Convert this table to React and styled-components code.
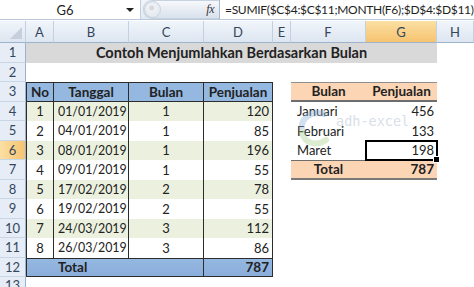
import React from 'react';
import styled, { createGlobalStyle } from 'styled-components';

const GlobalStyle = createGlobalStyle`
  html, body {
    margin: 0;
    padding: 0;
    background: #fff;
  }
  body {
    width: 474px;
    height: 287px;
    overflow: hidden;
    font-family: Lato, "Open Sans", sans-serif;
  }
`;

const Window = styled.div`
  width: 474px;
  height: 287px;
  display: flex;
  flex-direction: column;
  overflow: hidden;
  position: relative;
  background: #fff;
`;

const FormulaBar = styled.div`
  display: flex;
  align-items: stretch;
  height: 21px;
  border-bottom: 1px solid #b9c9dc;
  background: linear-gradient(#f1f5fa, #e3eaf3);
`;

const NameBox = styled.div`
  width: 140px;
  display: flex;
  align-items: center;
  background: #fff;
  border-right: 1px solid #c3cfdd;
  font-size: 13px;
  color: #222;
`;

const NameText = styled.span`
  flex: 1;
  text-align: center;
  padding-left: 4px;
`;

const DropArrow = styled.span`
  width: 0;
  height: 0;
  margin-right: 6px;
  border-left: 4px solid transparent;
  border-right: 4px solid transparent;
  border-top: 4px solid #222;
`;

const FxArea = styled.div`
  width: 76px;
  display: flex;
  align-items: center;
  padding-left: 2px;
`;

const Pill = styled.div`
  flex: 1;
  height: 17px;
  display: flex;
  align-items: center;
  justify-content: space-between;
  border-radius: 9px 0 0 9px;
  background: linear-gradient(#f6f8fb, #d9e1ec);
  border: 1px solid #c6d2e0;
  border-right: none;
`;

const Knob = styled.span`
  width: 15px;
  height: 15px;
  border-radius: 50%;
  background: radial-gradient(circle at 45% 40%, #d5d9df 0 2px, #eef1f5 3px, #dfe5ec 100%);
  border: 1px solid #c9d2dd;
`;

const Fx = styled.span`
  font-family: "Liberation Serif", serif;
  font-style: italic;
  font-size: 12px;
  color: #333;
  margin-right: 5px;
  letter-spacing: -0.5px;
`;

const FormulaInput = styled.div`
  flex: 1;
  display: flex;
  align-items: center;
  padding-left: 5px;
  background: #fff;
  border-left: 1px solid #a9b8cb;
  font-size: 12px;
  letter-spacing: -0.3px;
  color: #1e1e1e;
  white-space: nowrap;
  overflow: hidden;
`;

const Sheet = styled.div`
  position: relative;
  margin-top: 1px;
  display: grid;
  grid-template-columns: 26px 28px 75px 75px 69px 18px 75px 71px 1fr;
  grid-template-rows: 22px repeat(12, 19.5px) 1fr;
  flex: 1;
`;

const ColHead = styled.div`
  display: flex;
  align-items: center;
  justify-content: center;
  font-size: 13px;
  color: #34465c;
  background: ${(p) =>
    p.$active
      ? 'linear-gradient(#fbe0a4, #f6c36f)'
      : 'linear-gradient(#f1f5fb, #dde6f1)'};
  border-right: 1px solid #c2d0e1;
  border-bottom: 1px solid #9db3cc;
  box-sizing: border-box;
`;

const Corner = styled(ColHead)`
  position: relative;
  &::after {
    content: '';
    position: absolute;
    right: 3px;
    bottom: 3px;
    border-left: 12px solid transparent;
    border-bottom: 12px solid #c6cfdb;
  }
`;

const RowHead = styled.div`
  display: flex;
  align-items: center;
  justify-content: center;
  font-size: 13px;
  color: #34465c;
  background: ${(p) =>
    p.$active ? 'linear-gradient(90deg, #fbe0a4, #f6c36f)' : '#e6edf7'};
  border-right: 1px solid #9db3cc;
  border-bottom: 1px solid #c9d6e6;
  box-sizing: border-box;
`;

const DARK = '#2c2c2c';

const Cell = styled.div`
  position: relative;
  grid-column: span ${(p) => p.$span || 1};
  display: flex;
  align-items: center;
  justify-content: ${(p) =>
    p.$align === 'right' ? 'flex-end' : p.$align === 'center' ? 'center' : 'flex-start'};
  padding: 0 ${(p) => (p.$align === 'right' ? '3px' : '0')} 0
    ${(p) => (p.$indent != null ? `${p.$indent}px` : '5px')};
  box-sizing: border-box;
  font-size: ${(p) => (p.$size ? `${p.$size}px` : p.$bold ? '13.5px' : '13px')};
  font-weight: ${(p) => (p.$bold ? 700 : 400)};
  color: #222;
  white-space: nowrap;
  background: ${(p) => p.$fill || 'transparent'};
  border-left: ${(p) => p.$bl || 'none'};
  border-right: ${(p) => p.$br || 'none'};
  border-top: ${(p) => p.$bt || 'none'};
  border-bottom: ${(p) => p.$bb || 'none'};
  ${(p) =>
    p.$selected &&
    `
    outline: 2px solid #000;
    outline-offset: -1px;
    z-index: 1;
    &::after {
      content: '';
      position: absolute;
      right: -3px;
      bottom: -3px;
      width: 5px;
      height: 5px;
      background: #000;
      border: 1px solid #fff;
    }
  `}
`;

const Watermark = styled.div`
  position: absolute;
  left: 296px;
  top: 88px;
  display: flex;
  align-items: flex-start;
  pointer-events: none;
  opacity: 0.4;
`;

const WatermarkText = styled.span`
  font-family: "DejaVu Sans Mono", monospace;
  font-size: 13.5px;
  color: #9fb0c8;
  margin-left: 4px;
  margin-top: 4px;
`;

const BLUE = '#95b8e0';
const GREEN = '#ebf1de';
const ORANGE = '#fcd5b4';
const line = `1px solid ${DARK}`;

const leftTable = [
  ['1', '01/01/2019', '1', '120'],
  ['2', '04/01/2019', '1', '85'],
  ['3', '08/01/2019', '1', '196'],
  ['4', '09/01/2019', '1', '55'],
  ['5', '17/02/2019', '2', '78'],
  ['6', '19/02/2019', '2', '55'],
  ['7', '24/03/2019', '3', '112'],
  ['8', '26/03/2019', '3', '86'],
];

const summary = [
  ['Januari', '456'],
  ['Februari', '133'],
  ['Maret', '198'],
];

const columns = ['A', 'B', 'C', 'D', 'E', 'F', 'G', 'H'];

function buildRow(r) {
  const cells = [];
  const k = (c) => `${r}-${c}`;
  if (r === 1) {
    cells.push(
      <Cell key={k('A')} $span={7} $align="center" $indent={0} $bold $size={14.5} $fill="#d9d9d9">
        Contoh Menjumlahkan Berdasarkan Bulan
      </Cell>
    );
    cells.push(<Cell key={k('H')} />);
    return cells;
  }
  if (r === 2 || r > 12) {
    columns.forEach((c) => cells.push(<Cell key={k(c)} />));
    return cells;
  }
  // left table
  if (r === 3) {
    ['No', 'Tanggal', 'Bulan', 'Penjualan'].forEach((t, i) =>
      cells.push(
        <Cell
          key={k(i)}
          $align="center"
          $indent={0}
          $bold
          $fill={BLUE}
          $bt={line}
          $bb={line}
          $br={line}
          $bl={i === 0 ? line : undefined}
        >
          {t}
        </Cell>
      )
    );
  } else if (r <= 11) {
    const d = leftTable[r - 4];
    const fill = r % 2 === 0 ? GREEN : '#fff';
    cells.push(
      <Cell key={k('A')} $align="center" $indent={0} $fill={fill} $br={line} $bl={line}>
        {d[0]}
      </Cell>
    );
    cells.push(
      <Cell key={k('B')} $indent={4} $size={12.4} $fill={fill} $br={line}>
        {d[1]}
      </Cell>
    );
    cells.push(
      <Cell key={k('C')} $align="center" $indent={0} $fill={fill} $br={line}>
        {d[2]}
      </Cell>
    );
    cells.push(
      <Cell key={k('D')} $align="right" $fill={fill} $br={line}>
        {d[3]}
      </Cell>
    );
  } else {
    cells.push(
      <Cell
        key={k('A')}
        $span={3}
        $indent={31}
        $bold
        $fill={`linear-gradient(${BLUE}, #8aaedb)`}
        $bt={line}
        $bb={line}
        $br={line}
        $bl={line}
      >
        Total
      </Cell>
    );
    cells.push(
      <Cell
        key={k('D')}
        $align="right"
        $bold
        $fill={`linear-gradient(${BLUE}, #8aaedb)`}
        $bt={line}
        $bb={line}
        $br={line}
      >
        787
      </Cell>
    );
  }
  cells.push(<Cell key={k('E')} />);
  // summary table
  if (r === 3) {
    cells.push(
      <Cell key={k('F')} $align="center" $indent={0} $bold $fill={ORANGE} $bt="1px solid #8f8f8f" $bb="2px solid #6d6d6d">
        Bulan
      </Cell>
    );
    cells.push(
      <Cell key={k('G')} $align="center" $indent={0} $bold $fill={ORANGE} $bt="1px solid #8f8f8f" $bb="2px solid #6d6d6d">
        Penjualan
      </Cell>
    );
  } else if (r >= 4 && r <= 6) {
    const s = summary[r - 4];
    cells.push(
      <Cell key={k('F')} $indent={6}>
        {s[0]}
      </Cell>
    );
    cells.push(
      <Cell key={k('G')} $align="right" $selected={r === 6}>
        {s[1]}
      </Cell>
    );
  } else if (r === 7) {
    cells.push(
      <Cell key={k('F')} $align="center" $indent={0} $bold $fill={ORANGE} $bt="1px solid #6d6d6d" $bb="2px solid #7a7a7a">
        Total
      </Cell>
    );
    cells.push(
      <Cell key={k('G')} $align="right" $bold $fill={ORANGE} $bt="1px solid #6d6d6d" $bb="2px solid #7a7a7a">
        787
      </Cell>
    );
  } else {
    cells.push(<Cell key={k('F')} />);
    cells.push(<Cell key={k('G')} />);
  }
  cells.push(<Cell key={k('H')} />);
  return cells;
}

const WatermarkLogo = () => (
  <svg width="36" height="40" viewBox="0 0 36 40">
    <path d="M28 5 C15 1 4 10 6 21" fill="none" stroke="#8fb2dd" strokeWidth="6" strokeLinecap="round" />
    <path d="M6 23 C8 34 20 38 30 31" fill="none" stroke="#a9d08e" strokeWidth="6" strokeLinecap="round" />
  </svg>
);

export default function App() {
  const rows = Array.from({ length: 13 }, (_, i) => i + 1);
  return (
    <Window>
      <GlobalStyle />
      <FormulaBar>
        <NameBox>
          <NameText>G6</NameText>
          <DropArrow />
        </NameBox>
        <FxArea>
          <Pill>
            <Knob />
            <Fx>fx</Fx>
          </Pill>
        </FxArea>
        <FormulaInput>=SUMIF($C$4:$C$11;MONTH(F6);$D$4:$D$11)</FormulaInput>
      </FormulaBar>
      <Sheet>
        <Corner />
        {columns.map((c) => (
          <ColHead key={c} $active={c === 'G'}>
            {c}
          </ColHead>
        ))}
        {rows.map((r) => (
          <React.Fragment key={r}>
            <RowHead $active={r === 6}>{r}</RowHead>
            {buildRow(r)}
          </React.Fragment>
        ))}
        <Watermark>
          <WatermarkLogo />
          <WatermarkText>adh-excel</WatermarkText>
        </Watermark>
      </Sheet>
    </Window>
  );
}
